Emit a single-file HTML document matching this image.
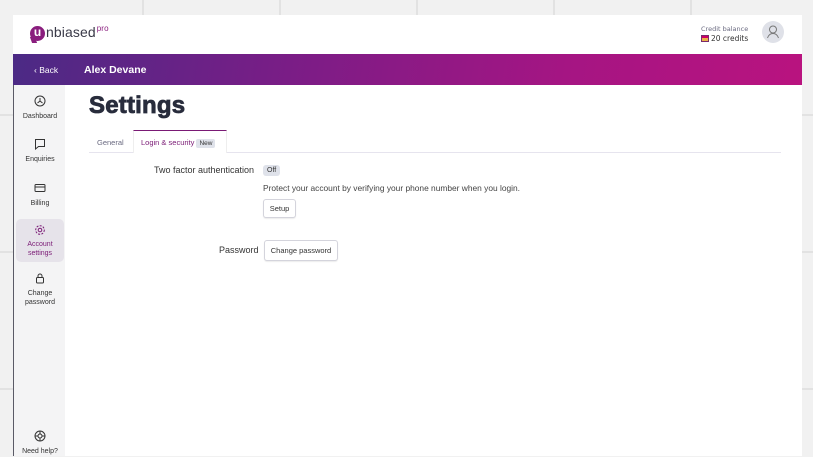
<!DOCTYPE html>
<html><head><meta charset="utf-8"><style>
*{box-sizing:border-box;margin:0;padding:0}
body{width:813px;height:456px;overflow:hidden;background:#f1f1f1;font-family:"Liberation Sans",sans-serif;position:relative}
.gv{position:absolute;top:0;width:2px;height:456px;background:#e2e2e2}
.gh{position:absolute;left:0;width:813px;height:2px;background:#e2e2e2}
.app{position:absolute;left:13px;top:15px;width:789px;height:441px;background:#fff}
.top{height:39px;position:relative}
.bar{position:absolute;top:39px;left:0;width:789px;height:31px;background:linear-gradient(100deg,#4b2a85 0%,#7a1d86 35%,#a51583 70%,#b9137f 100%);color:#fff}
.side{position:absolute;left:0;top:70px;width:52px;height:371px;background:#f4f4f5;border-left:1.5px solid #5a5a66}
.ni{position:absolute;left:2px;width:48px;text-align:center;font-size:7px;color:#333;line-height:8.5px}
.ni svg{display:block;margin:0 auto 6px}
.lbl{position:absolute;font-size:9px;color:#333}
.btn{position:absolute;border:1px solid #d4d4dc;border-radius:3px;font-size:7.5px;color:#333;background:#fff;box-shadow:0 1px 1px rgba(0,0,0,.08);text-align:center}
</style></head><body>
<div class="gv" style="left:142px"></div><div class="gv" style="left:279px"></div><div class="gv" style="left:416px"></div><div class="gv" style="left:553px"></div><div class="gv" style="left:690px"></div>
<div class="gh" style="top:114px"></div><div class="gh" style="top:251px"></div><div class="gh" style="top:388px"></div>
<div class="app">
 <div class="top">
  <div style="position:absolute;left:17px;top:11px;width:15px;height:15px;border-radius:50%;background:#8a1e7e;color:#fff;font-size:12px;line-height:13px;text-align:center;font-weight:bold">u</div>
  <div style="position:absolute;left:18px;top:22px;width:5px;height:6px;background:#8a1e7e;transform:skewX(20deg)"></div>
  <div style="position:absolute;left:33px;top:9px;font-size:14px;color:#3a3a48;letter-spacing:.1px">nbiased<sup style="font-size:8px;color:#8a1e7e;vertical-align:6px;margin-left:1px">pro</sup></div>
  <div style="position:absolute;left:688px;top:10px;font-size:6.5px;color:#6a6a80;font-family:'DejaVu Sans',sans-serif">Credit balance</div>
  <div style="position:absolute;left:688px;top:19px;font-size:7.5px;color:#333;font-family:'DejaVu Sans',sans-serif"><span style="display:inline-block;width:8px;height:7px;border:1px solid #7a2a6a;vertical-align:-1px;margin-right:2px;background:linear-gradient(#c06 0 40%,#e9b04a 40%)"></span>20 credits</div>
  <div style="position:absolute;left:749px;top:6px;width:22px;height:22px;border-radius:50%;background:#dfe1e8">
   <svg width="22" height="22" viewBox="0 0 22 22"><circle cx="11" cy="8.5" r="3.5" fill="none" stroke="#777" stroke-width="1"/><path d="M5.5 17c1-3 3-4.5 5.5-4.5s4.5 1.5 5.5 4.5" fill="none" stroke="#777" stroke-width="1"/></svg>
  </div>
 </div>
 <div class="bar">
  <div style="position:absolute;left:21px;top:11px;font-size:8.5px">‹ Back</div>
  <div style="position:absolute;left:71px;top:10px;font-size:10.5px;font-weight:bold">Alex Devane</div>
 </div>
 <div class="side">
  <div class="ni" style="top:10px"><svg width="12" height="12" viewBox="0 0 12 12"><circle cx="6" cy="6" r="5" fill="none" stroke="#333"/><path d="M6 3v3l-2.5 2M6 6l2.5 2" stroke="#333" fill="none"/></svg>Dashboard</div>
  <div class="ni" style="top:53px"><svg width="12" height="12" viewBox="0 0 12 12"><path d="M1.5 1.5h9v7h-6l-3 2.5z" fill="none" stroke="#333"/></svg>Enquiries</div>
  <div class="ni" style="top:97px"><svg width="12" height="12" viewBox="0 0 12 12"><rect x="1" y="2.5" width="10" height="7" rx="1" fill="none" stroke="#333"/><path d="M1 5h10" stroke="#333"/></svg>Billing</div>
  <div class="ni" style="top:134px;height:43px;padding-top:5px;background:#e6e3ea;border-radius:5px;color:#7a1a75"><svg width="12" height="12" viewBox="0 0 12 12" style="margin-bottom:5px"><circle cx="6" cy="6" r="1.8" fill="none" stroke="#7a1a75"/><circle cx="6" cy="6" r="4.3" fill="none" stroke="#7a1a75" stroke-dasharray="2 1.3"/></svg>Account<br>settings</div>
  <div class="ni" style="top:187px"><svg width="12" height="12" viewBox="0 0 12 12"><rect x="2.5" y="5.5" width="7" height="5.5" rx="1" fill="none" stroke="#333"/><path d="M4 5.5V4a2 2 0 0 1 4 0v1.5" fill="none" stroke="#333"/></svg>Change<br>password</div>
  <div class="ni" style="top:345px"><svg width="12" height="12" viewBox="0 0 12 12"><circle cx="6" cy="6" r="5" fill="none" stroke="#333"/><circle cx="6" cy="6" r="2" fill="none" stroke="#333"/><path d="M6 1v3M6 8v3M1 6h3M8 6h3" stroke="#333"/></svg>Need help?</div>
 </div>
 <div style="position:absolute;left:76px;top:77px;font-size:24px;font-weight:900;color:#282c3c;letter-spacing:.2px;-webkit-text-stroke:0.8px #282c3c">Settings</div>
 <div style="position:absolute;left:76px;top:137px;width:692px;height:1px;background:#e6e4ee"></div>
 <div style="position:absolute;left:84px;top:123px;font-size:7.5px;color:#6a6a80">General</div>
 <div style="position:absolute;left:120px;top:115px;width:94px;height:23px;border-top:1.5px solid #7a1a75;background:#fff;border-left:1px solid #eee;border-right:1px solid #eee"></div>
 <div style="position:absolute;left:128px;top:123px;font-size:7.5px;color:#7a1a75">Login &amp; security <span style="background:#dfe2ea;color:#333;font-size:6.5px;padding:1px 3px;border-radius:2px">New</span></div>
 <div class="lbl" style="left:141px;top:150px">Two factor authentication</div>
 <div style="position:absolute;left:250px;top:150px;background:#dfe2ea;font-size:7px;color:#333;padding:2px 4px;border-radius:3px">Off</div>
 <div style="position:absolute;left:250px;top:168px;font-size:8.4px;color:#444">Protect your account by verifying your phone number when you login.</div>
 <div class="btn" style="left:250px;top:184px;width:33px;height:19px;line-height:17px">Setup</div>
 <div class="lbl" style="left:206px;top:230px">Password</div>
 <div class="btn" style="left:251px;top:225px;width:74px;height:21px;line-height:19px">Change password</div>
</div>
</body></html>
